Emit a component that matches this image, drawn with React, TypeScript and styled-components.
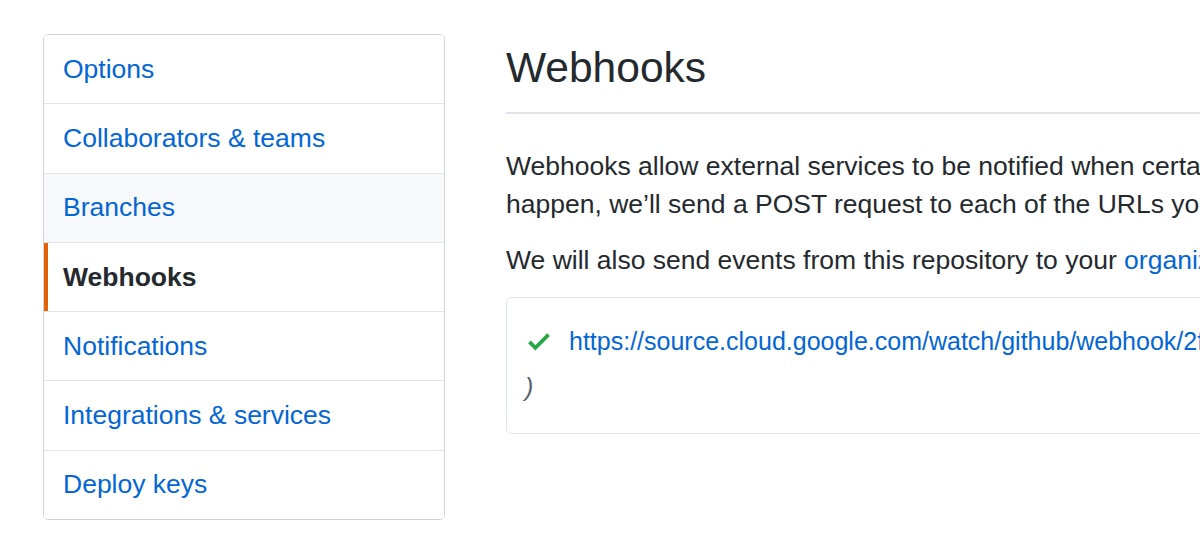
import React from "react";
import styled, { createGlobalStyle } from "styled-components";

const GlobalStyle = createGlobalStyle`
  html, body {
    margin: 0;
    padding: 0;
    background: #ffffff;
    overflow: hidden;
  }
  body {
    font-family: "Liberation Sans", Arial, sans-serif;
    color: #24292e;
  }
`;

const Page = styled.div`
  display: flex;
  align-items: flex-start;
  gap: 61px;
  width: 1200px;
  height: 539px;
  padding: 34px 0 0 43px;
  box-sizing: border-box;
  overflow: hidden;
`;

const Menu = styled.nav`
  flex: 0 0 402px;
  display: flex;
  flex-direction: column;
  border: 1px solid #d1d5da;
  border-radius: 5px;
  box-sizing: border-box;
  background: #ffffff;
  overflow: hidden;
`;

const MenuItem = styled.a<{ $selected?: boolean; $hover?: boolean }>`
  position: relative;
  display: flex;
  align-items: center;
  height: 69.3px;
  padding: 0 19px;
  box-sizing: border-box;
  font-size: 26.5px;
  text-decoration: none;
  color: ${(p) => (p.$selected ? "#24292e" : "#0366d6")};
  font-weight: ${(p) => (p.$selected ? 700 : 400)};
  background: ${(p) => (p.$hover ? "#f6f8fa" : "#ffffff")};
  border-bottom: 1px solid #e1e4e8;

  &:last-child {
    border-bottom: none;
    height: 68px;
  }

  &::before {
    content: "";
    display: ${(p) => (p.$selected ? "block" : "none")};
    position: absolute;
    top: 0;
    bottom: 0;
    left: 0;
    width: 4px;
    background: #e36209;
  }
`;

const Main = styled.main`
  flex: 0 0 1000px;
  display: flex;
  flex-direction: column;
`;

const Header = styled.div`
  margin-top: 8px;
  padding-bottom: 18px;
  border-bottom: 2px solid #e1e4e8;
`;

const Title = styled.h2`
  margin: 0;
  font-size: 42.5px;
  line-height: 52px;
  font-weight: 400;
  color: #24292e;
`;

const Text = styled.p<{ $gap?: number }>`
  margin: ${(p) => p.$gap ?? 0}px 0 0;
  font-size: 26.5px;
  line-height: 38px;
  white-space: nowrap;
  color: #24292e;
`;

const Link = styled.a`
  color: #0366d6;
  text-decoration: none;
`;

const HookBox = styled.div`
  margin-top: 18px;
  height: 137px;
  box-sizing: border-box;
  padding: 24px 18px 0;
  border: 1px solid #e1e4e8;
  border-radius: 5px;
`;

const HookRow = styled.div`
  display: flex;
  align-items: center;
  gap: 19px;
  height: 38px;
  font-size: 25px;
  white-space: nowrap;
`;

const Check = styled.svg`
  flex: 0 0 auto;
  margin-left: 3px;
  fill: #28a745;
`;

const Events = styled.div`
  margin-top: 8px;
  height: 38px;
  line-height: 38px;
  font-size: 25px;
  font-style: italic;
  color: #586069;
`;

const items = [
  "Options",
  "Collaborators & teams",
  "Branches",
  "Webhooks",
  "Notifications",
  "Integrations & services",
  "Deploy keys",
];

export default function App() {
  return (
    <>
      <GlobalStyle />
      <Page>
        <Menu>
          {items.map((name) => (
            <MenuItem
              key={name}
              href="#"
              $selected={name === "Webhooks"}
              $hover={name === "Branches"}
            >
              {name}
            </MenuItem>
          ))}
        </Menu>
        <Main>
          <Header>
            <Title>Webhooks</Title>
          </Header>
          <Text $gap={33}>
            Webhooks allow external services to be notified when certain events
            happen. When the specified events
            <br />
            happen, we’ll send a POST request to each of the URLs you provide.
            Learn more in our <Link href="#">Webhooks Guide</Link>.
          </Text>
          <Text $gap={18}>
            We will also send events from this repository to your{" "}
            <Link href="#">organization’s webhooks</Link>.
          </Text>
          <HookBox>
            <HookRow>
              <Check width="22" height="29" viewBox="0 0 12 16">
                <path d="M12 5l-8 8-4-4 1.5-1.5L4 10l6.5-6.5L12 5z" />
              </Check>
              <Link href="#">
                https://source.cloud.google.com/watch/github/webhook/2f6a8c1e94
              </Link>
            </HookRow>
            <Events>)</Events>
          </HookBox>
        </Main>
      </Page>
    </>
  );
}
